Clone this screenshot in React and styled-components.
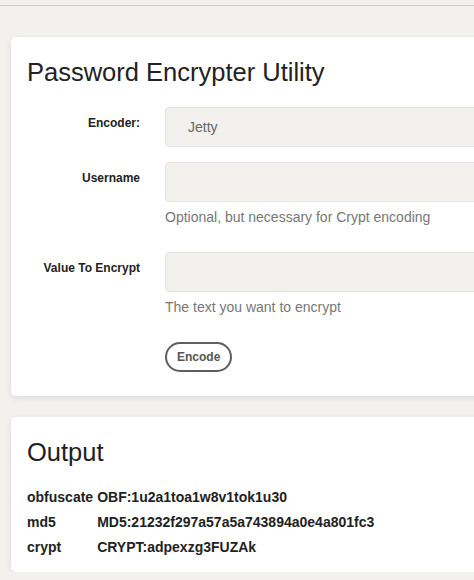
import styled, { createGlobalStyle } from "styled-components";

const GlobalStyle = createGlobalStyle`
    html, body {
        margin: 0;
        padding: 0;
        overflow: hidden;
        background-color: #f2f1ee;
        font-family: "Liberation Sans", Arial, sans-serif;
        color: #222;
    }
`;

const OUTPUT = [
    { name: "obfuscate", value: "OBF:1u2a1toa1w8v1tok1u30" },
    { name: "md5", value: "MD5:21232f297a57a5a743894a0e4a801fc3" },
    { name: "crypt", value: "CRYPT:adpexzg3FUZAk" },
];

export default function App() {
    return (
        <>
            <GlobalStyle />
            <TopBar />
            <Page>
                <Card>
                    <Title>Password Encrypter Utility</Title>
                    <Form>
                        <Row>
                            <Label>Encoder:</Label>
                            <Field>
                                <Select defaultValue="jetty">
                                    <option value="jetty">Jetty</option>
                                </Select>
                            </Field>
                        </Row>
                        <Row>
                            <Label>Username</Label>
                            <Field>
                                <Input type="text" />
                                <Help>Optional, but necessary for Crypt encoding</Help>
                            </Field>
                        </Row>
                        <Row>
                            <Label>Value To Encrypt</Label>
                            <Field>
                                <Input type="text" />
                                <Help>The text you want to encrypt</Help>
                            </Field>
                        </Row>
                        <Row>
                            <Label />
                            <Field>
                                <Button type="button">Encode</Button>
                            </Field>
                        </Row>
                    </Form>
                </Card>
                <Card $compact>
                    <Title $compact>Output</Title>
                    <Results>
                        <tbody>
                            {OUTPUT.map((item) => (
                                <tr key={item.name}>
                                    <th>{item.name}</th>
                                    <td>{item.value}</td>
                                </tr>
                            ))}
                        </tbody>
                    </Results>
                </Card>
            </Page>
        </>
    );
}

const TopBar = styled.div`
    height: 5px;
    border-bottom: 1px solid #cdcbc7;
`;

const Page = styled.main`
    padding: 31px 0 0 11px;

    display: flex;
    flex-direction: column;
    gap: 21px;
`;

const Card = styled.section`
    width: 560px;

    padding: 20px 16px ${(props) => (props.$compact ? "12px" : "24px")};
    box-sizing: border-box;

    background-color: white;
    border-radius: 5px;
    box-shadow: 0 2px 6px rgba(0, 0, 0, 0.09);
`;

const Title = styled.h1`
    margin: 0 0 ${(props) => (props.$compact ? "17px" : "19px")};

    font-size: 25.5px;
    font-weight: 400;
    line-height: 31px;
    color: #222;
`;

const Form = styled.form`
    display: flex;
    flex-direction: column;
    gap: 15px;
`;

const Row = styled.div`
    display: grid;
    grid-template-columns: 113px 1fr;
    column-gap: 25px;
`;

const Label = styled.label`
    padding-top: 6px;

    text-align: right;
    font-size: 12px;
    font-weight: 700;
    line-height: 20px;
    color: #222;
`;

const Field = styled.div`
    display: flex;
    flex-direction: column;
    align-items: flex-start;
`;

const Input = styled.input`
    width: 100%;
    height: 40px;

    padding: 0 22px;
    box-sizing: border-box;

    background-color: #f2f1ee;
    border: 1px solid #e6e4e0;
    border-radius: 4px;

    font-family: "Liberation Sans", Arial, sans-serif;
    font-size: 14px;
    color: #666;
    outline: none;
`;

const Select = styled.select`
    width: 100%;
    height: 40px;

    padding: 0 22px;
    box-sizing: border-box;
    appearance: none;

    background-color: #f2f1ee;
    border: 1px solid #e6e4e0;
    border-radius: 4px;

    font-family: "Liberation Sans", Arial, sans-serif;
    font-size: 14px;
    color: #666;
    outline: none;
`;

const Help = styled.p`
    margin: 5px 0 10px;

    font-size: 14px;
    line-height: 20px;
    color: #777;
`;

const Button = styled.button`
    height: 30px;

    padding: 0 10px;

    background-color: white;
    border: 2px solid #625d58;
    border-radius: 15px;

    font-family: "Liberation Sans", Arial, sans-serif;
    font-size: 12px;
    font-weight: 700;
    color: #5a5550;
    cursor: pointer;
`;

const Results = styled.table`
    border-collapse: collapse;

    font-size: 14px;
    font-weight: 700;
    line-height: 25px;
    color: #222;

    th,
    td {
        padding: 0 4px 0 0;
        text-align: left;
        vertical-align: top;
    }

    th {
        font-weight: 700;
    }
`;
